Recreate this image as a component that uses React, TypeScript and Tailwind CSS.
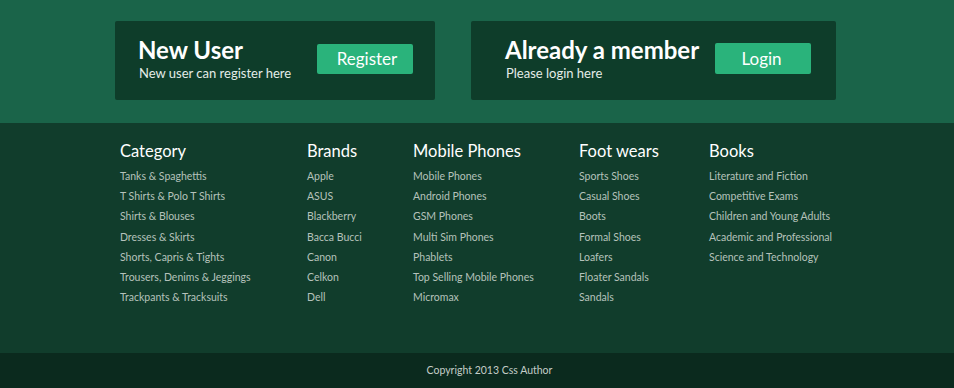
const columns = [
  {
    title: 'Category',
    width: 'w-[187px]',
    links: [
      'Tanks & Spaghettis',
      'T Shirts & Polo T Shirts',
      'Shirts & Blouses',
      'Dresses & Skirts',
      'Shorts, Capris & Tights',
      'Trousers, Denims & Jeggings',
      'Trackpants & Tracksuits',
    ],
  },
  {
    title: 'Brands',
    width: 'w-[106px]',
    links: ['Apple', 'ASUS', 'Blackberry', 'Bacca Bucci', 'Canon', 'Celkon', 'Dell'],
  },
  {
    title: 'Mobile Phones',
    width: 'w-[166px]',
    links: [
      'Mobile Phones',
      'Android Phones',
      'GSM Phones',
      'Multi Sim Phones',
      'Phablets',
      'Top Selling Mobile Phones',
      'Micromax',
    ],
  },
  {
    title: 'Foot wears',
    width: 'w-[130px]',
    links: ['Sports Shoes', 'Casual Shoes', 'Boots', 'Formal Shoes', 'Loafers', 'Floater Sandals', 'Sandals'],
  },
  {
    title: 'Books',
    width: 'w-[150px]',
    links: [
      'Literature and Fiction',
      'Competitive Exams',
      'Children and Young Adults',
      'Academic and Professional',
      'Science and Technology',
    ],
  },
];

export default function App() {
  return (
    <div className="w-[954px] h-[388px] flex flex-col font-['Lato','Liberation_Sans',sans-serif]">
      {/* Account boxes */}
      <section className="h-[123px] bg-[#1a6449] flex pl-[115px] pt-[21px] gap-[36px]">
        <div className="w-[320px] h-[79px] bg-[#0e3d2a] rounded-[2px] flex items-center pl-[23px] pr-[22px] justify-between">
          <div className="flex flex-col -mt-[3px]">
            <h2 className="text-[24px] leading-[28px] font-bold text-white">New User</h2>
            <p className="text-[13px] leading-[18px] text-[#e4ece8] ml-[1px]">New user can register here</p>
          </div>
          <button className="w-[96px] h-[30px] bg-[#2ab37b] rounded-[2px] text-[17px] text-white -mt-[4px] pl-[4px]">
            Register
          </button>
        </div>
        <div className="w-[365px] h-[79px] bg-[#0e3d2a] rounded-[2px] flex items-center pl-[34px] pr-[25px] justify-between">
          <div className="flex flex-col -mt-[3px]">
            <h2 className="text-[24px] leading-[28px] font-bold text-white">Already a member</h2>
            <p className="text-[13px] leading-[18px] text-[#e4ece8] ml-[1px]">Please login here</p>
          </div>
          <button className="w-[96px] h-[31px] bg-[#2ab37b] rounded-[2px] text-[17px] text-white -mt-[4px] pr-[3px]">
            Login
          </button>
        </div>
      </section>

      {/* Link columns */}
      <section className="flex-1 bg-[#113d2c] flex pl-[120px] pt-[18px]">
        {columns.map((col) => (
          <div key={col.title} className={`${col.width} flex flex-col`}>
            <h3 className="text-[16.5px] leading-[21px] text-white mb-[4px]">{col.title}</h3>
            <ul className="flex flex-col">
              {col.links.map((link) => (
                <li key={link} className="text-[10.5px] leading-[20.2px] text-[#b5c2bb]">
                  {link}
                </li>
              ))}
            </ul>
          </div>
        ))}
      </section>

      <footer className="h-[35px] bg-[#0b2a1e] flex items-center justify-center">
        <p className="text-[10.5px] text-[#c4cdc8] ml-[25px]">Copyright 2013 Css Author</p>
      </footer>
    </div>
  );
}
